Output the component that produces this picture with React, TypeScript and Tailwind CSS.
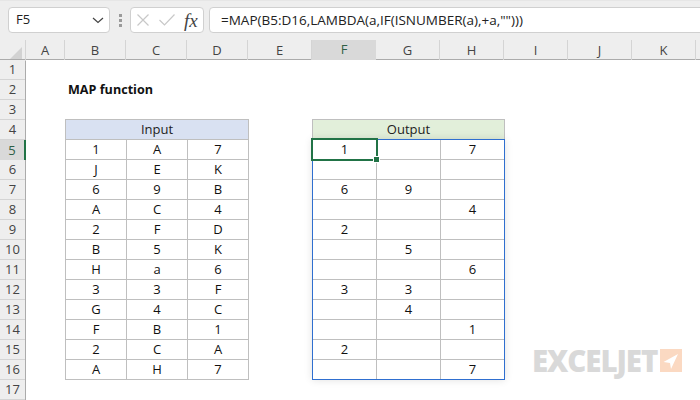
const cols = ['A', 'B', 'C', 'D', 'E', 'F', 'G', 'H', 'I', 'J', 'K'];

const input = [
  ['1', 'A', '7'],
  ['J', 'E', 'K'],
  ['6', '9', 'B'],
  ['A', 'C', '4'],
  ['2', 'F', 'D'],
  ['B', '5', 'K'],
  ['H', 'a', '6'],
  ['3', '3', 'F'],
  ['G', '4', 'C'],
  ['F', 'B', '1'],
  ['2', 'C', 'A'],
  ['A', 'H', '7'],
];

const output = [
  ['1', '', '7'],
  ['', '', ''],
  ['6', '9', ''],
  ['', '', '4'],
  ['2', '', ''],
  ['', '5', ''],
  ['', '', '6'],
  ['3', '3', ''],
  ['', '4', ''],
  ['', '', '1'],
  ['2', '', ''],
  ['', '', '7'],
];

const gridCols = 'grid grid-cols-[26px_39px_61px_61px_61px_64px_64px_64px_64px_64px_64px_64px_4px]';

function Logo() {
  return (
    <div className="absolute left-[532px] top-[349px] flex items-start gap-[3px]">
      <span className="text-[29.5px] leading-[23px] h-[23px] font-black tracking-[-1.1px] text-[#d9d9d9] font-['Open_Sans',sans-serif]">
        EXCELJET
      </span>
      <svg width="22" height="23" viewBox="0 0 22 23" className="shrink-0">
        <rect width="22" height="23" fill="#fbd9c2" />
        <path d="M3.5 13 L18 5 L11 20 L10 14 Z" fill="#ffffff" />
      </svg>
    </div>
  );
}

function Toolbar() {
  return (
    <div className="h-[40px] bg-[#eeeeee] flex items-start pt-[6px] border-t border-[#e6e6e6]">
      <div className="shrink-0 ml-[8px] w-[102px] h-[26px] bg-white border border-[#d0d0d0] rounded-[4px] flex items-center justify-between pl-[7px] pr-[5px] text-[13px] text-[#222222]">
        <span>F5</span>
        <svg width="12" height="7" viewBox="0 0 12 7" fill="none" stroke="#444444" strokeWidth="1.2">
          <path d="M1 1 L6 5.5 L11 1" />
        </svg>
      </div>
      <div className="shrink-0 w-[10px] mx-[5px] h-[26px] flex flex-col items-center justify-center gap-[2px]">
        <span className="w-[3px] h-[3px] bg-[#9a9a9a]" />
        <span className="w-[3px] h-[3px] bg-[#9a9a9a]" />
        <span className="w-[3px] h-[3px] bg-[#9a9a9a]" />
      </div>
      <div className="shrink-0 w-[74px] h-[26px] bg-white border border-[#d0d0d0] rounded-[4px] flex items-center pl-[6px]">
        <svg width="12" height="12" viewBox="0 0 12 12" fill="none" stroke="#c8c8c8" strokeWidth="1.2">
          <path d="M0.5 0.5 L11.5 11.5 M11.5 0.5 L0.5 11.5" />
        </svg>
        <svg width="16" height="12" viewBox="0 0 16 12" fill="none" stroke="#c8c8c8" strokeWidth="1.2" className="ml-[10px]">
          <path d="M0.5 6 L5.5 11 L15.5 0.5" />
        </svg>
        <span className="ml-[9px] text-[19px] leading-none italic text-[#444444] font-['Liberation_Serif',serif]">fx</span>
      </div>
      <div className="shrink-0 ml-[5px] w-[700px] h-[26px] bg-white border border-[#d0d0d0] rounded-l-[4px] flex items-center pl-[11px] text-[13.5px] text-[#222222] whitespace-nowrap">
        =MAP(B5:D16,LAMBDA(a,IF(ISNUMBER(a),+a,&quot;&quot;)))
      </div>
    </div>
  );
}

function ColumnHeader() {
  return (
    <div className={`${gridCols} h-[20px] bg-[#eeeeee] border-b border-[#ababab]`}>
      <div className="relative border-r border-[#d4d4d4]">
        <div className="absolute right-[3px] bottom-[2px] w-0 h-0 border-l-[12px] border-l-transparent border-b-[12px] border-b-[#d2d2d2]" />
      </div>
      {cols.map((c) =>
        c === 'F' ? (
          <div key={c} className="bg-[#d9d9d9] border-b-2 border-[#217346] -mb-[1px] flex items-center justify-center text-[13px] text-[#2f5f46]">
            {c}
          </div>
        ) : (
          <div key={c} className="border-r border-[#d4d4d4] flex items-center justify-center text-[13px] text-[#444444]">
            {c}
          </div>
        ),
      )}
      <div />
    </div>
  );
}

function TableCell({ value, tone, last }: { value: string; tone: 'input' | 'output'; last: boolean }) {
  return (
    <div
      className={`flex items-center justify-center pt-[1px] text-[13px] text-[#111111] border-r border-[#bfbfbf] ${
        last && tone === 'output' ? 'h-[19px] border-b-0' : 'h-[20px] border-b'
      } ${tone === 'output' ? 'last:border-r-0' : ''}`}
    >
      {value}
    </div>
  );
}

function Sheet() {
  return (
    <div className="flex h-[340px]">
      {/* row numbers */}
      <div className="w-[26px] shrink-0 bg-[#eeeeee] border-r border-[#ababab]">
        {Array.from({ length: 17 }, (_, i) => i + 1).map((n) => (
          <div
            key={n}
            className={
              n === 5
                ? 'h-[20px] pt-[1px] bg-[#d9d9d9] border-r-2 border-[#217346] -mr-[1px] flex items-center justify-center text-[13px] text-[#2f5f46]'
                : 'h-[20px] pt-[1px] border-b border-[#d4d4d4] flex items-center justify-center text-[13px] text-[#444444]'
            }
          >
            {n}
          </div>
        ))}
      </div>

      {/* cells */}
      <div className="relative flex-1 bg-white">
        <div className="pl-[42px] pt-[20px] h-[40px] text-[12.6px] font-bold leading-[20px] text-[#111111]">MAP function</div>
        <div className="flex pl-[39px] pt-[19px]">
          <div className="w-[184px] border-l border-[#bfbfbf]">
            <div className="h-[21px] -ml-[1px] w-[184px] bg-[#d9e1f2] border border-[#bfbfbf] flex items-center justify-center text-[13px] text-[#222222]">
              Input
            </div>
            {input.map((row, i) => (
              <div key={i} className="grid grid-cols-[61px_61px_61px]">
                {row.map((v, j) => (
                  <TableCell key={j} value={v} tone="input" last={i === input.length - 1} />
                ))}
              </div>
            ))}
          </div>
          <div className="ml-[63px] w-[193px]">
            <div className="h-[21px] bg-[#e2efda] border border-[#bfbfbf] flex items-center justify-center text-[13px] text-[#222222]">
              Output
            </div>
            <div className="relative -mt-[1px] border border-[#2f6fd0] shadow-[0_0_8px_rgba(0,0,0,0.12)]">
              {output.map((row, i) => (
                <div key={i} className="grid grid-cols-[64px_64px_63px]">
                  {row.map((v, j) => (
                    <TableCell key={j} value={v} tone="output" last={i === output.length - 1} />
                  ))}
                </div>
              ))}
            </div>
          </div>
        </div>

        {/* active cell */}
        <div className="absolute left-[285px] top-[78px] w-[67px] h-[23px] border-2 border-[#217346]">
          <span className="absolute -right-[4px] -bottom-[4px] w-[7px] h-[7px] bg-[#217346] border border-white" />
        </div>
      </div>
    </div>
  );
}

export default function App() {
  return (
    <div className="relative w-[700px] h-[400px] overflow-hidden bg-white font-['Open_Sans',sans-serif]">
      <Toolbar />
      <ColumnHeader />
      <Sheet />
      <Logo />
    </div>
  );
}
